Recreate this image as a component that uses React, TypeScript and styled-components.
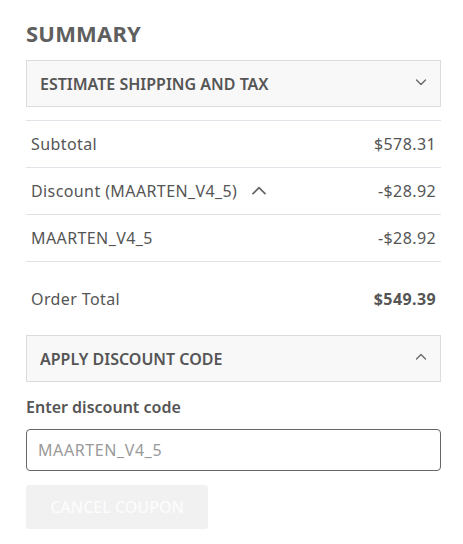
import styled, { createGlobalStyle } from "styled-components"

const GlobalStyle = createGlobalStyle`
    body {
        margin : 0;
        background : #fff;
        font-family : "Noto Sans", "Open Sans", sans-serif;
        color : #555;
    }
`

const Chevron = ({ up, size = 12 }: { up?: boolean, size?: number }) => (
    <svg width={size} height={size} viewBox="0 0 12 12" fill="none">
        <path
            d={up ? "M1.5 8 L6 3.5 L10.5 8" : "M1.5 4 L6 8.5 L10.5 4"}
            stroke="#666"
            strokeWidth="1.3"
            strokeLinecap="round"
            strokeLinejoin="round"
        />
    </svg>
)

export default function App() {
    return (
        <>
            <GlobalStyle />
            <Wrapper>
                <Title>SUMMARY</Title>
                <Panel>
                    <span>ESTIMATE SHIPPING AND TAX</span>
                    <Chevron />
                </Panel>
                <Rows>
                    <Row>
                        <span>Subtotal</span>
                        <span>$578.31</span>
                    </Row>
                    <Row>
                        <Label>
                            Discount (MAARTEN_V4_5)
                            <Chevron up size={16} />
                        </Label>
                        <span>-$28.92</span>
                    </Row>
                    <Row>
                        <span>MAARTEN_V4_5</span>
                        <span>-$28.92</span>
                    </Row>
                    <Row total>
                        <span>Order Total</span>
                        <strong>$549.39</strong>
                    </Row>
                </Rows>
                <Panel>
                    <span>APPLY DISCOUNT CODE</span>
                    <Chevron up />
                </Panel>
                <Field>
                    <FieldLabel>Enter discount code</FieldLabel>
                    <Input placeholder="MAARTEN_V4_5" />
                </Field>
                <CancelButton disabled>CANCEL COUPON</CancelButton>
            </Wrapper>
        </>
    )
}

const Wrapper = styled.div`
    width : 415px;
    padding : 18px 22px 15px 26px;
    display : flex;
    flex-direction : column;
`

const Title = styled.h2`
    margin : 0 0 12px;
    font-size : 22px;
    font-weight : 700;
    line-height : 30px;
    color : #5f5f5f;
    letter-spacing : 0.2px;
`

const Panel = styled.div`
    height : 45px;
    padding : 0 13px 0 13px;
    display : flex;
    align-items : center;
    justify-content : space-between;
    background : #f8f8f8;
    border : 1px solid #dcdcdc;
    font-size : 16px;
    font-weight : 600;
    color : #555;
    svg { margin-top : -4px; }
`

const Rows = styled.div`
    margin-top : 13px;
    display : flex;
    flex-direction : column;
    border-top : 1px solid #e2e2e8;
`

const Row = styled.div<{ total?: boolean }>`
    height : ${({ total }) => (total ? "73px" : "46px")};
    padding : 0 5px;
    display : flex;
    align-items : center;
    justify-content : space-between;
    font-size : 16px;
    letter-spacing : 0.4px;
    color : #555;
    border-bottom : ${({ total }) => (total ? "none" : "1px solid #e2e2e8")};
    strong { font-weight : 700; color : #555; }
`

const Label = styled.span`
    display : flex;
    align-items : center;
    gap : 14px;
`

const Field = styled.div`
    margin-top : 14px;
    display : flex;
    flex-direction : column;
    gap : 11px;
`

const FieldLabel = styled.label`
    font-size : 16px;
    font-weight : 600;
    color : #555;
`

const Input = styled.input`
    height : 42px;
    box-sizing : border-box;
    padding : 0 11px;
    border : 1px solid #666;
    border-radius : 4px;
    font-family : inherit;
    font-size : 16px;
    letter-spacing : 0.6px;
    outline : none;
    &::placeholder { color : #999; }
`

const CancelButton = styled.button`
    margin-top : 14px;
    width : 182px;
    height : 44px;
    border : none;
    border-radius : 3px;
    background : #f1f1f1;
    color : #fcfcfc;
    font-family : inherit;
    font-size : 16px;
    font-weight : 500;
`
